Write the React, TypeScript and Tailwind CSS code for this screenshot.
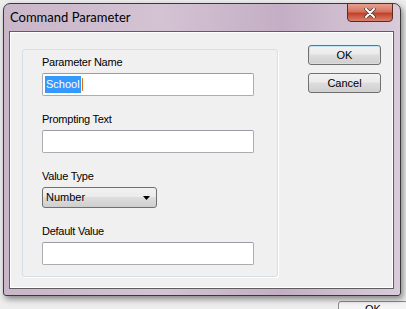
import React from 'react'

const btn =
  'flex h-[20px] w-[73px] items-center justify-center rounded-[3px] border border-[#707070] bg-[linear-gradient(#f2f2f2_0%,#ebebeb_45%,#dddddd_50%,#cfcfcf_100%)] text-[11px] text-black'

function Field({ label, children }: { label: string; children: React.ReactNode }) {
  return (
    <div className="flex flex-col">
      <div className="h-[15px] text-[11px] leading-[15px] tracking-[-0.25px] text-black">{label}</div>
      {children}
    </div>
  )
}

function TextBox({ children }: { children?: React.ReactNode }) {
  return (
    <div className="mt-[3px] flex h-[23px] w-[212px] items-center rounded-[2px] border border-[#abadb3] border-t-[#9a9ca4] bg-white px-[2px] text-[11px]">
      {children}
    </div>
  )
}

export default function App() {
  return (
    <div
      className="relative h-[309px] w-[406px] overflow-hidden bg-[#ededed] pl-[3px] pt-[3px]"
      style={{ fontFamily: '"Liberation Sans", Arial, sans-serif' }}
    >
      {/* desktop bits behind the dialog */}
      <div className="absolute left-[338px] top-[301px] flex h-[20px] w-[70px] justify-center rounded-[3px] border border-[#8a8a8a] bg-[#f4f4f4] text-[11px] leading-[14px]">
        OK
      </div>

      {/* window */}
      <div className="relative flex h-[293px] w-[398px] flex-col rounded-t-[7px] rounded-b-[3px] border border-[#3a3a3a] bg-[linear-gradient(90deg,#c9b6c9_0%,#d3c3d3_40%,#c4aec5_70%,#d9cbd9_100%)] shadow-[2px_3px_6px_rgba(0,0,0,0.45)]">
        <div className="flex h-[27px] items-center pl-[6px]">
          <span className="text-[13px] text-black" style={{ fontFamily: 'Lato, "Noto Sans", sans-serif' }}>
            Command Parameter
          </span>
        </div>
        <div className="absolute right-[7px] top-[-1px] flex h-[19px] w-[46px] items-center justify-center rounded-b-[4px] border border-[#5a2a24] bg-[linear-gradient(#e8a08f_0%,#d4735f_45%,#c2412a_55%,#d8826c_100%)]">
          <svg width="12" height="10" viewBox="0 0 12 10">
            <path d="M2 1 L10 9 M10 1 L2 9" stroke="#3a3a3a" strokeWidth="3.4" strokeLinecap="round" />
            <path d="M2 1 L10 9 M10 1 L2 9" stroke="#ffffff" strokeWidth="2" strokeLinecap="round" />
          </svg>
        </div>

        {/* client area */}
        <div className="mx-[5px] h-[258px] w-[385px] border border-[#5e5e5e]">
          <div className="flex h-full gap-[30px] border border-white bg-[#f0f0f0] pl-[11px] pt-[16px]">
            <div className="flex h-[228px] w-[256px] flex-col gap-[16px] rounded-[3px] border border-[#d5dfe5] pl-[19px] pt-[5px] shadow-[1px_1px_0_#ffffff]">
              <Field label="Parameter Name">
                <TextBox>
                  <span className="bg-[#3399ff] px-[1px] text-white">School</span>
                  <span className="ml-[1px] h-[13px] w-[1px] bg-[#e07020]" />
                </TextBox>
              </Field>
              <Field label="Prompting Text">
                <TextBox />
              </Field>
              <Field label="Value Type">
                <div className="mt-[3px] flex h-[21px] w-[115px] items-center justify-between rounded-[3px] border border-[#707070] bg-[linear-gradient(#f2f2f2_0%,#ebebeb_45%,#dddddd_50%,#cfcfcf_100%)] pl-[3px] pr-[6px] text-[11px]">
                  <span>Number</span>
                  <svg width="7" height="4" viewBox="0 0 7 4">
                    <path d="M0 0 H7 L3.5 4 Z" fill="#000" />
                  </svg>
                </div>
              </Field>
              <Field label="Default Value">
                <TextBox />
              </Field>
            </div>
            <div className="flex flex-col gap-[8px]">
              <div className={`${btn} -mt-[4px] border-[#3c7fb1] shadow-[inset_0_0_0_1px_#bfe6f8]`}>OK</div>
              <div className={btn}>Cancel</div>
            </div>
          </div>
        </div>
      </div>
    </div>
  )
}
